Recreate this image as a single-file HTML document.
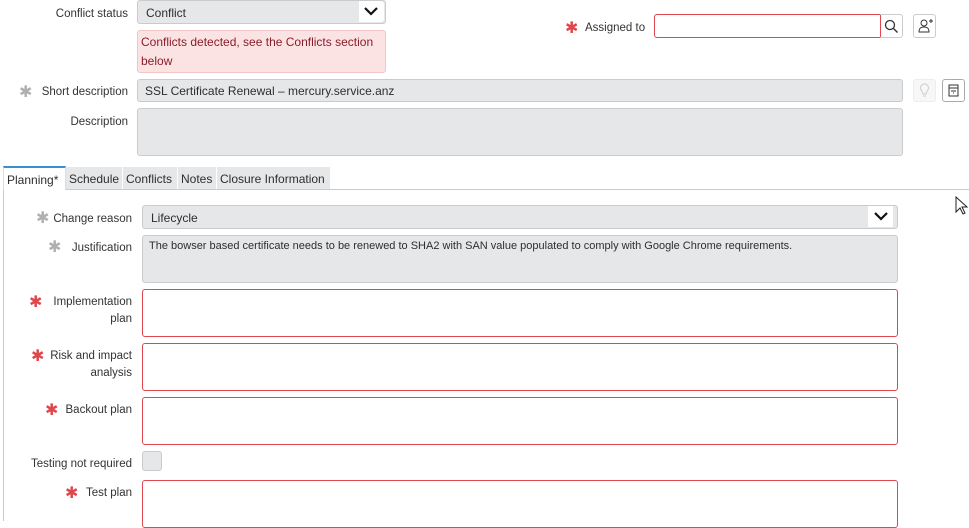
<!DOCTYPE html>
<html><head><style>
body{margin:0;width:969px;height:521px;background:#fff;font-family:"Liberation Sans",sans-serif;font-size:12px;color:#2e2e2e;position:relative;overflow:hidden}
.a{position:absolute;box-sizing:border-box}
.lbl{position:absolute;text-align:right;font-size:11.5px;color:#333;line-height:17px;margin-top:2px}
.ast{color:#e0474c;font-size:16px;position:absolute;font-weight:300;margin-top:1px}
.ast.g{color:#b0b0b0}
.ro{background:#e6e7e8;border:1px solid #c9cbcd;border-radius:3px}
.req{background:#fff;border:1px solid #e0474c;border-radius:3px}
.tab{position:absolute;top:167px;height:22px;background:#e6e7e8;border-right:1px solid #fff;font-size:12px;line-height:25px;padding-left:3px;box-sizing:border-box}
</style></head><body>
<div class="lbl" style="right:841px;top:4px">Conflict status</div>
<div class="a ro" style="left:137px;top:0;width:249px;height:24px;padding:5px 8px;font-size:12px">Conflict</div>
<div class="a" style="left:359px;top:1px;width:25px;height:21px;background:#fff;border-radius:0 3px 3px 0"><svg width="25" height="21"><path d="M6 7l6 6 6-6" stroke="#111" stroke-width="2.2" fill="none"/></svg></div>
<div class="a" style="left:137px;top:30px;width:249px;height:43px;background:#fbe3e4;border:1px solid #f4c5c7;border-radius:3px;color:#8b1d2a;padding:2px 3px;line-height:19px;font-size:12px">Conflicts detected, see the Conflicts section below</div>

<div class="ast" style="left:565px;top:17px">✱</div>
<div class="lbl" style="left:585px;top:18px">Assigned to</div>
<div class="a req" style="left:654px;top:14px;width:227px;height:24px;border-radius:3px 0 0 3px"></div>
<div class="a" style="left:880px;top:14px;width:23px;height:24px;border:1px solid #c9cbcd;border-left:none;border-radius:0 3px 3px 0"><svg width="22" height="22"><circle cx="10" cy="10" r="4.5" stroke="#333" stroke-width="1.3" fill="none"/><path d="M13.5 13.5l4 4" stroke="#333" stroke-width="1.4"/></svg></div>
<div class="a" style="left:913px;top:14px;width:23px;height:24px;border:1px solid #c9cbcd;border-radius:3px"><svg width="22" height="22"><circle cx="10" cy="8" r="3" stroke="#333" fill="none"/><path d="M5 17c0-4 2-5 5-5s5 1 5 5zM15 6h4M17 4v4" stroke="#333" fill="none"/></svg></div>

<div class="ast g" style="left:19px;top:81px">✱</div>
<div class="lbl" style="right:841px;top:82px">Short description</div>
<div class="a ro" style="left:137px;top:79px;width:766px;height:23px;padding:4px 7px;font-size:12px">SSL Certificate Renewal – mercury.service.anz</div>
<div class="a" style="left:913px;top:79px;width:23px;height:23px;border:1px solid #eceded;border-radius:3px;background:#f7f7f7"><svg width="22" height="22"><path d="M8 11a4 4 0 1 1 5 0l-1 3h-3z M9 16h3" stroke="#ccc" fill="none"/></svg></div>
<div class="a" style="left:942px;top:79px;width:23px;height:23px;border:1px solid #aaa;border-radius:3px"><svg width="22" height="22"><rect x="6" y="5" width="9" height="11" stroke="#333" fill="none"/><path d="M6 8h9M8 11h5M10 13h1" stroke="#333"/></svg></div>

<div class="lbl" style="right:841px;top:112px">Description</div>
<div class="a ro" style="left:137px;top:108px;width:766px;height:48px"></div>

<div class="a" style="left:3px;top:189px;width:966px;height:1px;background:#c9cbcd"></div>
<div class="a" style="left:3px;top:189px;width:1px;height:332px;background:#c9cbcd"></div>
<div class="tab" style="left:3px;top:166px;height:24px;width:63px;background:#fff;border-top:2px solid #3c8fcf;border-left:1px solid #ddd;border-right:1px solid #ddd">Planning*</div>
<div class="tab" style="left:66px;width:57px">Schedule</div>
<div class="tab" style="left:123px;width:55px">Conflicts</div>
<div class="tab" style="left:178px;width:39px">Notes</div>
<div class="tab" style="left:217px;width:114px">Closure Information</div>

<div class="ast g" style="left:36px;top:207px">✱</div>
<div class="lbl" style="right:837px;top:209px">Change reason</div>
<div class="a ro" style="left:142px;top:205px;width:756px;height:24px;padding:5px 8px">Lifecycle</div>
<div class="a" style="left:868px;top:206px;width:25px;height:21px;background:#fff"><svg width="25" height="21"><path d="M7 7l6 6 6-6" stroke="#111" stroke-width="2.2" fill="none"/></svg></div>

<div class="ast g" style="left:48px;top:236px">✱</div>
<div class="lbl" style="right:837px;top:238px">Justification</div>
<div class="a ro" style="left:142px;top:235px;width:756px;height:48px;padding:4px 6px;font-size:11px">The bowser based certificate needs to be renewed to SHA2 with SAN value populated to comply with Google Chrome requirements.</div>

<div class="ast" style="left:29px;top:291px">✱</div>
<div class="lbl" style="right:837px;top:292px">Implementation<br>plan</div>
<div class="a req" style="left:142px;top:289px;width:756px;height:48px"></div>

<div class="ast" style="left:31px;top:345px">✱</div>
<div class="lbl" style="right:837px;top:346px">Risk and impact<br>analysis</div>
<div class="a req" style="left:142px;top:343px;width:756px;height:48px"></div>

<div class="ast" style="left:45px;top:399px">✱</div>
<div class="lbl" style="right:837px;top:400px">Backout plan</div>
<div class="a req" style="left:142px;top:397px;width:756px;height:48px"></div>

<div class="lbl" style="right:837px;top:454px">Testing not required</div>
<div class="a ro" style="left:142px;top:451px;width:20px;height:20px;border-radius:3px"></div>

<div class="ast" style="left:65px;top:482px">✱</div>
<div class="lbl" style="right:837px;top:483px">Test plan</div>
<div class="a req" style="left:142px;top:480px;width:756px;height:48px"></div>

<svg class="a" style="left:955px;top:196px" width="14" height="20"><path d="M1 1v15l4-4 3 6 2-1-3-6h5z" fill="#fff" stroke="#222"/></svg>
</body></html>
